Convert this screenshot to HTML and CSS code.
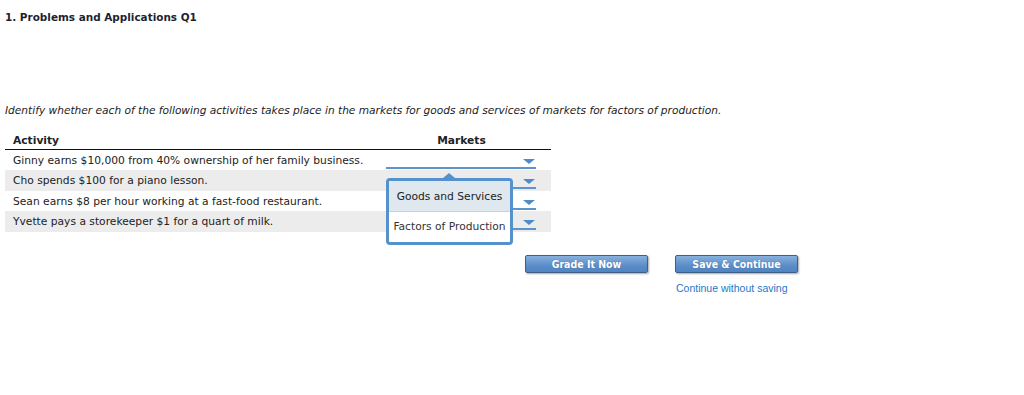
FILE: index.html
```html
<!DOCTYPE html>
<html>
<head>
<meta charset="utf-8">
<link rel="stylesheet" href="styles.css">
</head>
<body>
<h1 class="title">1. Problems and Applications Q1</h1>
<p class="instr">Identify whether each of the following activities takes place in the markets for goods and services of markets for factors of production.</p>
<div class="grid-wrap">
  <table class="grid">
    <thead>
      <tr><th class="c-act">Activity</th><th class="c-mkt">Markets</th></tr>
    </thead>
    <tbody>
      <tr><td class="c-act">Ginny earns $10,000 from 40% ownership of her family business.</td><td class="c-mkt"><div class="sel"><span class="arrow"></span></div></td></tr>
      <tr class="alt"><td class="c-act">Cho spends $100 for a piano lesson.</td><td class="c-mkt"><div class="sel"><span class="arrow"></span></div></td></tr>
      <tr><td class="c-act">Sean earns $8 per hour working at a fast-food restaurant.</td><td class="c-mkt"><div class="sel"><span class="arrow"></span></div></td></tr>
      <tr class="alt"><td class="c-act">Yvette pays a storekeeper $1 for a quart of milk.</td><td class="c-mkt"><div class="sel"><span class="arrow"></span></div></td></tr>
    </tbody>
  </table>
  <div class="popup">
    <div class="opt opt-hi">Goods and Services</div>
    <div class="opt">Factors of Production</div>
  </div>
</div>
<div class="actions">
  <button class="btn">Grade It Now</button>
  <div class="save-col">
    <button class="btn">Save &amp; Continue</button>
    <a class="link" href="#">Continue without saving</a>
  </div>
</div>
</body>
</html>
```
FILE: styles.css
```css
html, body {
  margin: 0;
  padding: 0;
  background: #fff;
}
body {
  font-family: "DejaVu Sans", Verdana, sans-serif;
  font-size: 10.7px;
  color: #222;
}
.title {
  margin: 10px 0 0 5px;
  font-size: 10.45px;
  line-height: 14px;
  font-weight: bold;
  color: #1f1f33;
}
.instr {
  margin: 79px 0 0 5px;
  font-style: italic;
  font-size: 10.6px;
  line-height: 14px;
  color: #222;
}
.grid-wrap {
  position: relative;
  margin: 15px 0 0 5px;
  width: 546px;
}
.grid {
  width: 546px;
  border-collapse: collapse;
  table-layout: fixed;
}
.grid th {
  height: 17px;
  padding: 0;
  font-size: 10.7px;
  font-weight: bold;
  border-bottom: 1px solid #111;
  line-height: 16px;
  vertical-align: middle;
}
.grid th.c-act {
  text-align: left;
  padding-left: 8px;
  width: 367px;
}
.grid th.c-mkt {
  text-align: center;
  padding-right: 8px;
}
.grid tbody tr {
  height: 20.5px;
}
.grid td {
  padding: 0;
  vertical-align: top;
  font-size: 10.7px;
  line-height: 14px;
}
.grid td.c-act {
  padding: 4px 0 0 8px;
  white-space: nowrap;
}
.grid tr.alt td {
  background: #ececec;
}
.grid td.c-mkt {
  padding-left: 6px;
}
.sel {
  position: relative;
  width: 150px;
  height: 19px;
  border-bottom: 2px solid #5b95cc;
  box-sizing: border-box;
}
.arrow {
  position: absolute;
  right: 1px;
  top: 9px;
  width: 0;
  height: 0;
  border-left: 6px solid transparent;
  border-right: 6px solid transparent;
  border-top: 5px solid #4f8bc8;
}
.popup {
  position: absolute;
  left: 381px;
  top: 46px;
  width: 127px;
  height: 67px;
  box-sizing: border-box;
  border: 3px solid #5592cc;
  border-radius: 4px;
  background: #fff;
}
.popup::before {
  content: "";
  position: absolute;
  left: 54px;
  top: -8px;
  border-left: 6px solid transparent;
  border-right: 6px solid transparent;
  border-bottom: 5px solid #5592cc;
}
.opt {
  height: 30px;
  line-height: 30px;
  text-align: center;
  font-size: 10.7px;
  color: #333;
  white-space: nowrap;
}
.opt-hi {
  line-height: 32px;
  background: #dfe8ee;
  color: #222;
  border-bottom: 1px solid #c5d2dc;
}
.actions {
  display: flex;
  align-items: flex-start;
  gap: 27px;
  margin: 23px 0 0 525px;
}
.save-col {
  display: flex;
  flex-direction: column;
  align-items: flex-start;
}
.btn {
  width: 123px;
  height: 18px;
  padding: 0;
  border: 1px solid #3e5f86;
  border-radius: 2px;
  background: linear-gradient(#88b1dd, #5a8dc9 60%, #4f84c2);
  box-shadow: 1px 1px 2px rgba(0,0,0,0.35);
  color: #fff;
  font-family: "DejaVu Sans Condensed", "DejaVu Sans", Verdana, sans-serif;
  font-size: 10.5px;
  font-weight: bold;
  line-height: 16px;
  text-shadow: 0 0 1px rgba(30,60,110,0.4);
}
.link {
  margin: 8px 0 0 1px;
  font-family: "Liberation Sans", Arial, sans-serif;
  font-size: 10.5px;
  line-height: 14px;
  color: #1e78c8;
  text-decoration: none;
}
```
